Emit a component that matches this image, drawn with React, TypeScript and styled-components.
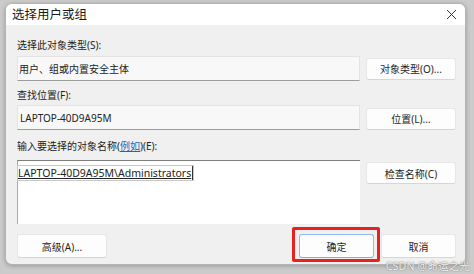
import React from "react";
import styled, { createGlobalStyle } from "styled-components";

const Global = createGlobalStyle`
  html, body { margin: 0; padding: 0; }
  body {
    background: #cbcbcb;
    width: 474px;
    height: 274px;
    overflow: hidden;
    font-family: "Noto Sans", "Noto Sans CJK SC", sans-serif;
    position: relative;
  }
`;

const Page = styled.div`
  width: 474px;
  height: 274px;
  padding: 3px 0 0 5px;
  box-sizing: border-box;
  position: relative;
`;

const Window = styled.div`
  width: 461px;
  height: 262px;
  box-sizing: border-box;
  background: #f0f0f0;
  border: 1px solid #b4b4b4;
  border-radius: 7px;
  overflow: hidden;
  display: flex;
  flex-direction: column;
  box-shadow: 0 1px 4px rgba(0, 0, 0, 0.25);
`;

const TitleBar = styled.div`
  height: 21px;
  background: #ffffff;
  display: flex;
  align-items: center;
  justify-content: space-between;
  padding: 0 8px 0 6px;
  flex-shrink: 0;
`;

const Title = styled.div`
  font-size: 12.5px;
  color: #1a1a1a;
  line-height: 1;
  padding-top: 1px;
`;

const Close = styled.div`
  width: 12px;
  height: 12px;
  display: flex;
  align-items: center;
  justify-content: center;
`;

const Content = styled.div`
  padding: 0 9px 0 11px;
  display: flex;
  flex-direction: column;
`;

const Label = styled.div<{ $top: number }>`
  margin-top: ${(p) => p.$top}px;
  height: 14px;
  line-height: 14px;
  font-size: 10px;
  color: #222;
`;

const Row = styled.div<{ $top: number; $align?: string }>`
  margin-top: ${(p) => p.$top}px;
  display: grid;
  grid-template-columns: 343px 90px;
  column-gap: 6px;
  align-items: ${(p) => p.$align || "center"};
`;

const Field = styled.div`
  height: 25px;
  box-sizing: border-box;
  background: #f8f8f8;
  border: 1px solid #e4e4e4;
  border-bottom: 1px solid #9c9c9c;
  padding-left: 1px;
  display: flex;
  align-items: center;
  font-size: 10px;
  color: #222;
`;

const TextArea = styled.div`
  height: 64px;
  box-sizing: border-box;
  background: #ffffff;
  border-top: 1px solid #7d7d7d;
  border-left: 1px solid #a8a8a8;
  padding: 5px 0 0 0;
  font-size: 10.5px;
  color: #222;
`;

const Resolved = styled.span`
  text-decoration: underline;
  text-underline-offset: 1px;
  border-right: 1px solid #333;
  padding-right: 1px;
  outline: 1px solid #c8c8c8;
`;

const Link = styled.span`
  color: #1a66c2;
  text-decoration: underline;
`;

const Button = styled.div<{ $w?: number; $h?: number; $primary?: boolean; $mt?: number }>`
  width: ${(p) => p.$w || 90}px;
  height: ${(p) => p.$h || 22}px;
  margin-top: ${(p) => p.$mt || 0}px;
  box-sizing: border-box;
  background: #fdfdfd;
  border: 1px solid ${(p) => (p.$primary ? "#8fbbe8" : "#e6e6e6")};
  border-bottom-color: ${(p) => (p.$primary ? "#7aaee3" : "#d6d6d6")};
  border-radius: 3px;
  display: flex;
  align-items: center;
  justify-content: center;
  font-size: 10px;
  color: #1e1e1e;
  position: relative;
`;

const Highlight = styled.div`
  position: absolute;
  left: -8px;
  right: -7px;
  top: -8px;
  bottom: -5px;
  border: 3px solid #e8211f;
  border-radius: 2px;
  pointer-events: none;
`;

const Footer = styled.div`
  margin-top: 10px;
  display: flex;
  align-items: center;
`;

const Spacer = styled.div`
  flex: 1;
`;

const FooterGap = styled.div`
  width: 7px;
`;

const Watermark = styled.div`
  position: absolute;
  right: 4px;
  bottom: 1px;
  font-size: 10.5px;
  color: rgba(255, 255, 255, 0.9);
  text-shadow: 0 0 1px #777, 0 0 2px #999;
  letter-spacing: 0.2px;
`;

export default function App() {
  return (
    <>
      <Global />
      <Page>
        <Window>
          <TitleBar>
            <Title>选择用户或组</Title>
            <Close>
              <svg width="11" height="11" viewBox="0 0 11 11">
                <path d="M1 1 L10 10 M10 1 L1 10" stroke="#333" strokeWidth="1" fill="none" />
              </svg>
            </Close>
          </TitleBar>
          <Content>
            <Label $top={13}>选择此对象类型(S):</Label>
            <Row $top={4}>
              <Field>用户、组或内置安全主体</Field>
              <Button>对象类型(O)...</Button>
            </Row>
            <Label $top={7}>查找位置(F):</Label>
            <Row $top={3}>
              <Field style={{ paddingLeft: 2 }}>LAPTOP-40D9A95M</Field>
              <Button $mt={2}>位置(L)...</Button>
            </Row>
            <Label $top={9}>
              输入要选择的对象名称(<Link>例如</Link>)(E):
            </Label>
            <Row $top={7} $align="start">
              <TextArea>
                <Resolved>LAPTOP-40D9A95M\Administrators</Resolved>
              </TextArea>
              <Button $mt={2}>检查名称(C)</Button>
            </Row>
            <Footer>
              <Button $h={24}>高级(A)...</Button>
              <Spacer />
              <Button $w={75} $h={24} $primary>
                确定
                <Highlight />
              </Button>
              <FooterGap />
              <Button $w={75} $h={24}>取消</Button>
            </Footer>
          </Content>
        </Window>
        <Watermark>CSDN @命运之光</Watermark>
      </Page>
    </>
  );
}
